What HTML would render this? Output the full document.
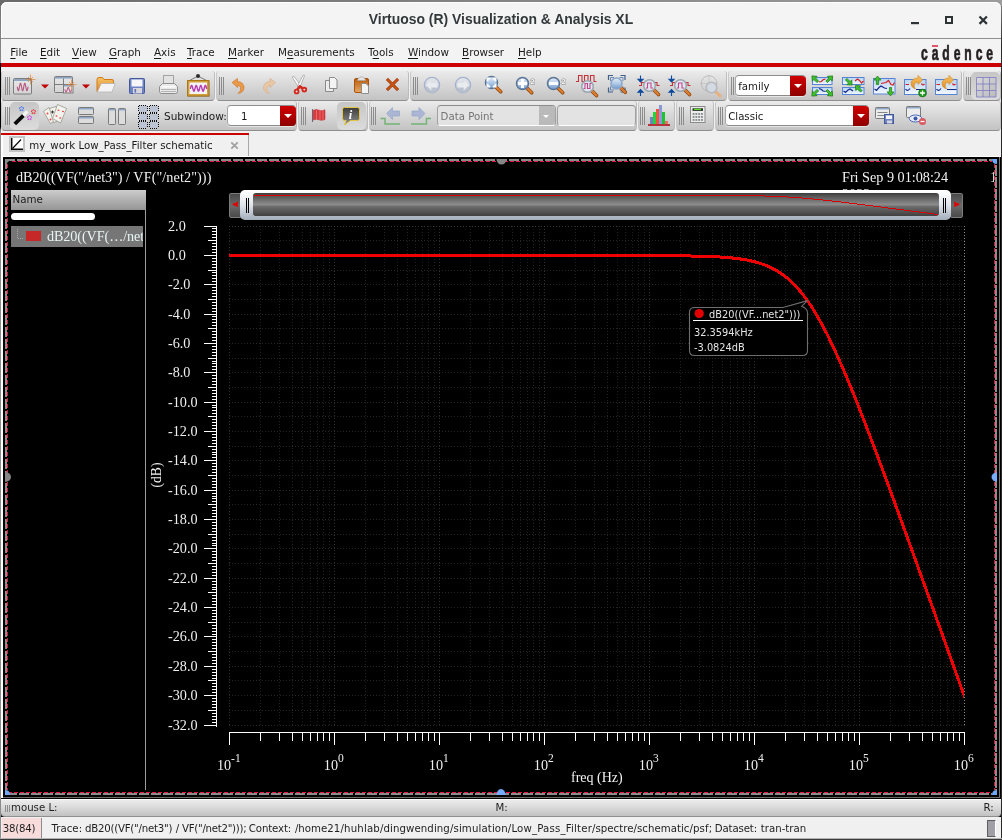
<!DOCTYPE html>
<html lang="en"><head><meta charset="utf-8"><title>Virtuoso (R) Visualization &amp; Analysis XL</title>
<style>
html,body{margin:0;padding:0;background:#000;}
body{width:1002px;height:840px;overflow:hidden;position:relative;font-family:"DejaVu Sans","Liberation Sans",sans-serif;font-size:10.3px;color:#1a1a1a;}
#win{position:absolute;left:0;top:0;width:1002px;height:840px;overflow:hidden;will-change:transform;}
.abs{position:absolute;}
#win div,#win span,#win svg{position:absolute;white-space:pre;}
#win u{text-decoration:underline;text-underline-offset:1.5px;text-decoration-thickness:1px;}
/* title */
#deskbg{left:0;top:0;width:1002px;height:12px;background:linear-gradient(90deg,#6a6a6a,#8a8a8a 60%,#9c9c9c);}
#titlebar{left:1px;top:2px;width:1000px;height:36px;background:#f4f4f4;border-radius:6px 6px 0 0;box-shadow:inset 0 1px 0 #fff,inset 1px 0 0 #fff;}
#titletext{left:0;top:10px;width:1002px;text-align:center;font:bold 15.4px "Liberation Sans",sans-serif;color:#33393b;line-height:18px;transform:scaleX(0.905);transform-origin:500.5px 0;}
#titleline{left:1px;top:38px;width:1000px;height:1px;background:#8f8f8f;}
#menubar{left:1px;top:39px;width:1000px;height:24px;background:#f3f3f3;}
.mi{top:44px;line-height:16px;font-size:10.4px;color:#1a1a1a;}
#redline{left:1px;top:63px;width:1000px;height:4px;background:#cc0000;}
#tbarea{left:1px;top:67px;width:1000px;height:64px;background:#f0f0f0;}
.tb{background:linear-gradient(#ebebeb,#dbdbdb 40%,#c3c3c3);border-bottom:1px solid #8e8e8e;border-right:1px solid #bcbcbc;border-left:1px solid #c8c8c8;border-radius:3px 3px 4px 4px;box-sizing:border-box;}
.hd{width:5px;height:18px;background:linear-gradient(90deg,#8c8c8c 0 0.9px,transparent 0.9px 2px,#8c8c8c 2px 2.9px,transparent 2.9px 4.1px,#8c8c8c 4.1px 5px);}
#tabred{left:1px;top:133px;width:248px;height:2px;background:#cc0000;}
#tabsep{left:248px;top:135px;width:1px;height:21px;background:#a8a8a8;}
#tabico{left:9px;top:136px;width:12px;height:12px;border:2px solid #c4c4c4;background:#fff;}
#tabtxt{left:29.2px;top:137px;font-size:10.25px;line-height:16px;color:#1a1a1a;}
#tabbar{left:1px;top:131px;width:1000px;height:25px;background:#f0f0f0;}
#tabwhite{left:1px;top:156px;width:1000px;height:1px;background:#fff;}
/* graph */
#graph{left:0;top:0;width:1002px;height:840px;}
#gbg{left:3px;top:157px;width:997px;height:642px;background:#000;}
.yl{left:168px;font:14.2px "Liberation Serif",serif;color:#f0f0f0;line-height:20px;}
.xl{transform:translateX(-50%);top:755px;font:14.2px "Liberation Serif",serif;color:#f0f0f0;line-height:20px;}
.xl sup{font-size:11.5px;vertical-align:baseline;position:relative;top:-8px;line-height:0;}
.gt{font:14.2px "Liberation Serif",serif;color:#f2f2f2;line-height:20px;}
#lghead{left:11px;top:190px;width:135px;height:20px;background:linear-gradient(#cdcdcd,#b0b0b0 50%,#959595);}
#lgname{left:12.5px;top:191px;font-size:10.3px;line-height:16px;color:#1c1c1c;}
#lgsep{left:145px;top:210px;width:1px;height:580px;background:#9c9c9c;}
#lgpill{left:11px;top:213px;width:84px;height:7px;border-radius:4px;background:#fff;}
#lgrow{left:11px;top:226px;width:132px;height:21px;background:#767676;overflow:hidden;}
#lgsw{left:15px;top:5px;width:15px;height:10px;background:#c62828;}
#lgtxt{left:36px;top:0px;font:14.2px "Liberation Serif",serif;color:#e8f4f4;line-height:20px;letter-spacing:-0.1px;}
.slbtn{top:193px;width:13px;height:25px;box-sizing:border-box;border:1px solid #7c7c7c;border-radius:2px;background:linear-gradient(#4a4a4a,#6a6a6a 50%,#4a4a4a);}
#slthumb{left:240px;top:190px;width:711px;height:30px;border-radius:5px;background:linear-gradient(#ffffff,#f4f6f9 20%,#dfe4ea 50%,#b9c2cd 80%,#a3adba);}
#sltrack{left:253px;top:193px;width:686px;height:23px;border-radius:3px;overflow:hidden;background:linear-gradient(#3c3c3c,#585858 15%,#8c8c8c 50%,#6a6a6a 60%,#404040);}
.grip{top:198px;width:1.2px;height:15px;background:#000;}
#ydb{left:136.5px;top:465px;width:40px;text-align:center;transform:rotate(-90deg);font-size:13.6px;}
.mk{font:9.8px "DejaVu Sans","Liberation Sans",sans-serif;color:#e4e4e4;line-height:15px;}
#edgeL{left:0;top:6px;width:1px;height:834px;background:linear-gradient(#777 0,#8a8a8a 57px,#000 57px,#000 121px,#8c8c8c 125px);}
#edgeLw{left:1px;top:135px;width:2px;height:663px;background:#fff;}
#edgeR{left:1001px;top:6px;width:1px;height:834px;background:linear-gradient(#777 0,#2a2a2a 40px);}
#edgeRg{left:999px;top:157px;width:1px;height:641px;background:#7a7a7a;}
#gbot{left:3px;top:797px;width:997px;height:1px;background:#6a6a6a;}
#st1w{left:1px;top:799px;width:1000px;height:1px;background:#fff;}
#st1{left:1px;top:800px;width:1000px;height:17px;box-sizing:border-box;border-bottom:1px solid #8e8e8e;border-radius:0 0 4px 4px;background:linear-gradient(#ececec,#d8d8d8 50%,#c2c2c2);}
.st{font-size:10.2px;line-height:16px;color:#1e1e1e;}
#st2{left:1px;top:817px;width:1000px;height:21px;background:#f0f0f0;}
#stpink{left:2px;top:818px;width:39px;height:20px;background:#f8dcdc;}
#stsep{left:41px;top:818px;width:1px;height:20px;background:#8c8c8c;}
#stgrip{left:987px;top:820px;width:8.5px;height:16.5px;box-sizing:border-box;background:#9f9fa5;border:1px solid #5e5e5e;border-right:1px solid #fff;}
#stbot{left:0;top:838px;width:1002px;height:2px;background:linear-gradient(#b4b4b4 0 1px,#3a3a3a 1px);}
.act{border-radius:5px;background:linear-gradient(#c6c6c6,#d0d0d0 45%,#dcdcdc);}
.cb{box-sizing:border-box;border:1px solid #a6a6a6;border-top-color:#8e8e8e;border-bottom-color:#8a8a8a;border-radius:4px;background:#fff;box-shadow:0 1px 0 rgba(255,255,255,0.55);}
.cb .cbr{position:absolute;right:-1px;top:-0.5px;bottom:-1px;width:16px;border-radius:0 4px 4px 0;background:linear-gradient(#d00000,#b40000 45%,#8c0000);}
.cb .cbr:after{content:"";position:absolute;left:4px;top:8.5px;border:4px solid transparent;border-top:4.5px solid #fff;border-bottom:0;}
.cb.dis{background:#e3e3e3;border-color:#8c8c8c #a0a0a0 #fdfdfd #a0a0a0;box-shadow:none;}
.cb.dis .cbr{background:#bababa;right:0;top:0;bottom:0;border-radius:0 3px 3px 0;}
.cb.dis .cbr:after{left:4.5px;top:8.5px;border-width:3.5px;border-top-width:3.5px;}
.cbt{font-size:10.2px;line-height:16px;color:#1a1a1a;}
#logo{left:921px;top:41px;font:bold 19.6px "Liberation Sans",sans-serif;letter-spacing:6.3px;color:#231f20;line-height:24px;transform-origin:0 0;transform:scaleX(0.62);-webkit-text-stroke:0.7px #231f20;}
#logobar{left:932px;top:45px;width:6px;height:2px;background:#e2566a;}

</style></head>
<body>
<div id="win">
<div id="deskbg"></div>
<div id="titlebar"></div>
<div id="titletext">Virtuoso (R) Visualization &amp; Analysis XL</div>
<div id="titleline"></div>
<div id="menubar"></div>
<span class="mi" style="left:10.3px"><u>F</u>ile</span>
<span class="mi" style="left:40px"><u>E</u>dit</span>
<span class="mi" style="left:72px"><u>V</u>iew</span>
<span class="mi" style="left:109px"><u>G</u>raph</span>
<span class="mi" style="left:154px"><u>A</u>xis</span>
<span class="mi" style="left:187px"><u>T</u>race</span>
<span class="mi" style="left:228px"><u>M</u>arker</span>
<span class="mi" style="left:278px">M<u>e</u>asurements</span>
<span class="mi" style="left:368px">T<u>o</u>ols</span>
<span class="mi" style="left:408px"><u>W</u>indow</span>
<span class="mi" style="left:462px"><u>B</u>rowser</span>
<span class="mi" style="left:518px"><u>H</u>elp</span>
<span id="logo">cadence</span>
<div id="logobar"></div>
<svg width="90" height="14" viewBox="0 0 90 14" style="left:905px;top:13px"><rect x="6" y="9" width="8" height="2.2" fill="#2e3436"/><rect x="41" y="4" width="6" height="6" fill="none" stroke="#2e3436" stroke-width="2"/><path d="M74.500 3.500L81.900 10.900M81.900 3.500L74.500 10.900" stroke="#2e3436" stroke-width="2.2" fill="none"/></svg>
<div id="redline"></div>
<div id="tbarea"></div>
<div id="tabbar"></div>
<div id="tabred"></div>
<div id="tabsep"></div>
<div id="tabwhite"></div>
<div id="tabico"><svg width="12" height="12" viewBox="0 0 12 12" style="left:0;top:0"><path d="M0.700 0V11.300H12" stroke="#0a0a0a" stroke-width="1.5" fill="none"/><path d="M1.500 10.500L10 1.500" stroke="#0a0a0a" stroke-width="1.2" fill="none"/></svg></div>
<span id="tabtxt">my_work Low_Pass_Filter schematic</span>
<svg width="9" height="9" viewBox="0 0 9 9" style="left:229.5px;top:140.5px"><path d="M1.300 1.300L7.700 7.700M7.700 1.300L1.300 7.700" stroke="#a2a2a2" stroke-width="1.8" fill="none"/></svg>

<div class="tb" style="left:1px;top:71px;width:214px;height:30px"></div>
<div class="tb" style="left:216px;top:71px;width:192.5px;height:30px"></div>
<div class="tb" style="left:409.5px;top:71px;width:317.5px;height:30px"></div>
<div class="tb" style="left:728px;top:71px;width:233.5px;height:30px"></div>
<div class="tb" style="left:963px;top:71px;width:38px;height:30px"></div>
<div class="tb" style="left:1px;top:101px;width:296px;height:30px"></div>
<div class="tb" style="left:298px;top:101px;width:69.5px;height:30px"></div>
<div class="tb" style="left:368.5px;top:101px;width:268.5px;height:30px"></div>
<div class="tb" style="left:637.5px;top:101px;width:37.5px;height:30px"></div>
<div class="tb" style="left:676px;top:101px;width:38px;height:30px"></div>
<div class="tb" style="left:715px;top:101px;width:286px;height:30px"></div>
<div class="act" style="left:10px;top:102px;width:29px;height:28px"></div>
<div class="act" style="left:337px;top:102px;width:29px;height:28px"></div>
<div class="act" style="left:971px;top:72px;width:29px;height:28px"></div>
<div class="hd" style="left:5px;top:77px"></div>
<div class="hd" style="left:219px;top:77px"></div>
<div class="hd" style="left:413px;top:77px"></div>
<div class="hd" style="left:731px;top:77px"></div>
<div class="hd" style="left:966px;top:77px"></div>
<div class="hd" style="left:5px;top:107px"></div>
<div class="hd" style="left:301px;top:107px"></div>
<div class="hd" style="left:371px;top:107px"></div>
<div class="hd" style="left:640px;top:107px"></div>
<div class="hd" style="left:679px;top:107px"></div>
<div class="hd" style="left:718px;top:107px"></div>
<div class="cb" style="left:735px;top:75px;width:71px;height:21px"><i class="cbr"></i></div>
<span class="cbt" style="left:738.2px;top:79px">family</span>
<div class="cb" style="left:227px;top:105px;width:69px;height:21px"><i class="cbr"></i></div>
<span class="cbt" style="left:241px;top:109px">1</span>
<div class="cb" style="left:725px;top:105px;width:143.5px;height:21px"><i class="cbr"></i></div>
<span class="cbt" style="left:728.2px;top:109px">Classic</span>
<div class="cb dis" style="left:437px;top:105px;width:118.5px;height:21px"><i class="cbr"></i></div>
<span class="cbt" style="left:440.6px;top:109px;color:#737373">Data Point</span>
<div class="cb dis" style="left:556.5px;top:105px;width:79.5px;height:21px"></div>
<span class="cbt" style="left:164px;top:108px;font-size:10.5px">Subwindow:</span>
<svg width="1002" height="140" viewBox="0 0 1002 140" style="left:0;top:0">
<defs>
<linearGradient id="lens" x1="0" y1="0" x2="0" y2="1"><stop offset="0" stop-color="#e6eef8"/><stop offset="0.5" stop-color="#b0cae8"/><stop offset="1" stop-color="#6f98cc"/></linearGradient>
<linearGradient id="lensg" x1="0" y1="0" x2="0" y2="1"><stop offset="0" stop-color="#e6e8ea"/><stop offset="1" stop-color="#c4ccd6"/></linearGradient>
<linearGradient id="pan" x1="0" y1="0" x2="0" y2="1"><stop offset="0" stop-color="#b8d4f4"/><stop offset="1" stop-color="#f4f8fe"/></linearGradient>
<linearGradient id="org" x1="0" y1="0" x2="0" y2="1"><stop offset="0" stop-color="#f6c46a"/><stop offset="1" stop-color="#e08a1e"/></linearGradient>
<linearGradient id="clip" x1="0" y1="0" x2="0" y2="1"><stop offset="0" stop-color="#b85a08"/><stop offset="1" stop-color="#e6a868"/></linearGradient>
<linearGradient id="grn" x1="0" y1="0" x2="0" y2="1"><stop offset="0" stop-color="#5fd03a"/><stop offset="1" stop-color="#1f8a14"/></linearGradient>
<linearGradient id="bub" x1="0" y1="0" x2="0" y2="1"><stop offset="0" stop-color="#3c3c3c"/><stop offset="1" stop-color="#8e8e8e"/></linearGradient>
<linearGradient id="wn" x1="0" y1="0" x2="0" y2="1"><stop offset="0" stop-color="#e8e8e8"/><stop offset="1" stop-color="#d4d4d4"/></linearGradient>
<linearGradient id="gridg" x1="0" y1="0" x2="1" y2="1"><stop offset="0" stop-color="#d8d8d8"/><stop offset="1" stop-color="#bcbcbc"/></linearGradient>
</defs>
<rect x="13.5" y="78.5" width="18" height="15.5" rx="1" fill="url(#wn)" stroke="#7c7c7c"/>
<rect x="14" y="79" width="17" height="2" fill="#8ea6c4"/>
<path d="M17.30 87.00L17.41 87.60L17.52 88.19L17.63 88.74L17.75 89.25L17.86 89.70L17.97 90.08L18.08 90.37L18.19 90.57L18.30 90.68L18.41 90.69L18.53 90.60L18.64 90.42L18.75 90.14L18.86 89.78L18.97 89.35L19.08 88.85L19.19 88.30L19.31 87.72L19.42 87.12L19.53 86.52L19.64 85.93L19.75 85.36L19.86 84.84L19.98 84.38L20.09 83.99L20.20 83.68L20.31 83.46L20.42 83.33L20.53 83.30L20.64 83.37L20.76 83.54L20.87 83.80L20.98 84.14L21.09 84.56L21.20 85.05L21.31 85.58L21.42 86.16L21.54 86.76L21.65 87.36L21.76 87.96L21.87 88.53L21.98 89.06L22.09 89.53L22.20 89.94L22.32 90.26L22.43 90.50L22.54 90.65L22.65 90.70L22.76 90.65L22.87 90.50L22.98 90.26L23.10 89.94L23.21 89.53L23.32 89.06L23.43 88.53L23.54 87.96L23.65 87.36L23.76 86.76L23.88 86.16L23.99 85.58L24.10 85.05L24.21 84.56L24.32 84.14L24.43 83.80L24.54 83.54L24.66 83.37L24.77 83.30L24.88 83.33L24.99 83.46L25.10 83.68L25.21 83.99L25.33 84.38L25.44 84.84L25.55 85.36L25.66 85.93L25.77 86.52L25.88 87.12L25.99 87.72L26.11 88.30L26.22 88.85L26.33 89.35L26.44 89.78L26.55 90.14L26.66 90.42L26.77 90.60L26.89 90.69L27.00 90.68L27.11 90.57L27.22 90.37L27.33 90.08L27.44 89.70L27.55 89.25L27.67 88.74L27.78 88.19L27.89 87.60L28.00 87.00" fill="none" stroke="#b85a82" stroke-width="1.15" stroke-linecap="round" stroke-linejoin="round"/>
<path d="M31.3 79.5L35.5 79.5M31.1 80.1L33.0 82.0M30.5 80.3L30.5 84.5M29.9 80.1L28.0 82.0M29.7 79.5L25.5 79.5M29.9 78.9L28.0 77.0M30.5 78.7L30.5 74.5M31.1 78.9L33.0 77.0" stroke="#e08434" stroke-width="0.7" fill="none"/><circle cx="30.5" cy="79.5" r="0.8" fill="#b07040"/>
<path d="M41 84.5H49L45 88.5Z" fill="#c00000"/>
<rect x="54.5" y="76.5" width="18" height="16" rx="1" fill="url(#wn)" stroke="#7c7c7c"/>
<rect x="55" y="77" width="17" height="1.6" fill="#8ea6c4"/>
<path d="M54.5 84.5H72.5M63.5 78.5V92.5" stroke="#7c7c7c" fill="none"/>
<rect x="63.5" y="84.5" width="9.5" height="8.5" fill="#e4e4e4" stroke="#7c7c7c"/><rect x="64" y="85" width="8.500" height="1.500" fill="#8ea6c4"/>
<path d="M65.00 89.80L65.07 90.03L65.14 90.25L65.20 90.47L65.27 90.68L65.34 90.88L65.41 91.08L65.47 91.26L65.54 91.43L65.61 91.58L65.68 91.71L65.74 91.83L65.81 91.92L65.88 92.00L65.95 92.06L66.02 92.09L66.08 92.10L66.15 92.09L66.22 92.06L66.29 92.00L66.35 91.92L66.42 91.83L66.49 91.71L66.56 91.58L66.62 91.43L66.69 91.26L66.76 91.08L66.83 90.88L66.90 90.68L66.96 90.47L67.03 90.25L67.10 90.03L67.17 89.80L67.23 89.57L67.30 89.35L67.37 89.13L67.44 88.92L67.51 88.72L67.57 88.52L67.64 88.34L67.71 88.17L67.78 88.02L67.84 87.89L67.91 87.77L67.98 87.68L68.05 87.60L68.11 87.54L68.18 87.51L68.25 87.50L68.32 87.51L68.39 87.54L68.45 87.60L68.52 87.68L68.59 87.77L68.66 87.89L68.72 88.02L68.79 88.17L68.86 88.34L68.93 88.52L68.99 88.72L69.06 88.92L69.13 89.13L69.20 89.35L69.27 89.57L69.33 89.80L69.40 90.03L69.47 90.25L69.54 90.47L69.60 90.68L69.67 90.88L69.74 91.08L69.81 91.26L69.88 91.43L69.94 91.58L70.01 91.71L70.08 91.83L70.15 91.92L70.21 92.00L70.28 92.06L70.35 92.09L70.42 92.10L70.48 92.09L70.55 92.06L70.62 92.00L70.69 91.92L70.76 91.83L70.82 91.71L70.89 91.58L70.96 91.43L71.03 91.26L71.09 91.08L71.16 90.88L71.23 90.68L71.30 90.47L71.36 90.25L71.43 90.03L71.50 89.80" fill="none" stroke="#b85a82" stroke-width="1.1" stroke-linecap="round" stroke-linejoin="round"/>
<path d="M72.3 84.5L76.5 84.5M72.1 85.1L74.0 87.0M71.5 85.3L71.5 89.5M70.9 85.1L69.0 87.0M70.7 84.5L66.5 84.5M70.9 83.9L69.0 82.0M71.5 83.7L71.5 79.5M72.1 83.9L74.0 82.0" stroke="#e08434" stroke-width="0.7" fill="none"/><circle cx="71.5" cy="84.5" r="0.8" fill="#b07040"/>
<path d="M82 84.5H90L86 88.5Z" fill="#c00000"/>
<path d="M97 91.5V79.5Q97 77.5 99 77.5H102.5L104 79.5H112Q113.5 79.5 113.5 81V84H101Z" fill="url(#org)" stroke="#d57b16" stroke-width="1"/>
<path d="M97.3 92L101.2 83.5H115.2L112 92Z" fill="#f4f4f4" stroke="#b4b4b4" stroke-width="0.8"/>
<rect x="129.5" y="78.5" width="15" height="15" rx="1" fill="#6d83c4" stroke="#44589c"/>
<rect x="131.5" y="79.5" width="11" height="7" fill="#f6f6f8"/>
<rect x="133" y="88" width="9" height="5.5" fill="#d6d6dc"/>
<rect x="134.5" y="89" width="1.6" height="3.5" fill="#5a70b8"/>
<rect x="163.5" y="75.5" width="10" height="9" fill="#e2e2e2" stroke="#a2a2a2"/>
<path d="M159.500 86.500L162.500 83.500H174.500L177.500 86.500V91.500Q177.500 93.500 175.500 93.500H161.500Q159.500 93.500 159.500 91.500Z" fill="#e9e9e9" stroke="#8e8e8e"/>
<path d="M161.500 86.800H175.500" stroke="#fff" stroke-width="1.4"/><path d="M161 89.500H176M161 91.500H176" stroke="#a8a8a8" stroke-width="0.8"/>
<path d="M189.500 80.500L198 76L206.500 80.500" fill="none" stroke="#7c7c7c" stroke-width="1"/>
<circle cx="198" cy="76" r="2" fill="#2c2c2c"/>
<rect x="188" y="81.300" width="21.500" height="15.500" fill="#555" opacity="0.5"/><rect x="187.500" y="80.500" width="21.500" height="15.500" fill="#d2a03a" stroke="#a87818"/>
<rect x="189.500" y="82.500" width="17.500" height="11.500" fill="#f4f4f4"/>
<path d="M190.50 88.30L190.67 87.64L190.83 87.02L191.00 86.46L191.17 86.00L191.33 85.66L191.50 85.46L191.67 85.40L191.83 85.50L192.00 85.74L192.17 86.12L192.33 86.61L192.50 87.19L192.67 87.83L192.83 88.49L193.00 89.14L193.17 89.75L193.33 90.28L193.50 90.71L193.67 91.01L193.83 91.18L194.00 91.19L194.17 91.05L194.33 90.76L194.50 90.35L194.67 89.83L194.83 89.23L195.00 88.58L195.17 87.92L195.33 87.28L195.50 86.69L195.67 86.18L195.83 85.79L196.00 85.52L196.17 85.41L196.33 85.44L196.50 85.62L196.67 85.94L196.83 86.39L197.00 86.93L197.17 87.55L197.33 88.21L197.50 88.87L197.67 89.50L197.83 90.07L198.00 90.54L198.17 90.90L198.33 91.12L198.50 91.20L198.67 91.12L198.83 90.90L199.00 90.54L199.17 90.07L199.33 89.50L199.50 88.87L199.67 88.21L199.83 87.55L200.00 86.93L200.17 86.39L200.33 85.94L200.50 85.62L200.67 85.44L200.83 85.41L201.00 85.52L201.17 85.79L201.33 86.18L201.50 86.69L201.67 87.28L201.83 87.92L202.00 88.58L202.17 89.23L202.33 89.83L202.50 90.35L202.67 90.76L202.83 91.05L203.00 91.19L203.17 91.18L203.33 91.01L203.50 90.71L203.67 90.28L203.83 89.75L204.00 89.14L204.17 88.49L204.33 87.83L204.50 87.19L204.67 86.61L204.83 86.12L205.00 85.74L205.17 85.50L205.33 85.40L205.50 85.46L205.67 85.66L205.83 86.00L206.00 86.46L206.17 87.02L206.33 87.64L206.50 88.30" fill="none" stroke="#b73cb3" stroke-width="1.4" stroke-linecap="round" stroke-linejoin="round"/>
<path d="M232 82.500L237.500 78.500V81.500Q244 82 244 88Q243.500 92.500 238 93.500Q241.500 91 240.500 87.500Q239.500 85 237.500 85.500V87.500Z" fill="#e9994a" stroke="#d07a26" stroke-width="0.7"/>
<path d="M275.500 82.500L270 78.500V81.500Q263.500 82 263.500 88Q264 92.500 269.500 93.500Q266 91 267 87.500Q268 85 270 85.500V87.500Z" fill="#e9c7a6" stroke="#d8b08a" stroke-width="0.7"/>
<path d="M292.200 77L294 76.200L301.400 86.500L299.200 88.300Z" fill="#fafafa" stroke="#9c9c9c" stroke-width="0.7"/>
<path d="M304.700 75.500L303 75.200L297.300 86.500L299.500 88.200Z" fill="#fafafa" stroke="#9c9c9c" stroke-width="0.7"/>
<path d="M299.600 86.600L297.400 89.800M299.800 86.400L303 88.600" fill="none" stroke="#d22a20" stroke-width="2.6" stroke-linecap="round"/>
<circle cx="296.600" cy="91.500" r="1.900" fill="#f0dcdc" stroke="#d22a20" stroke-width="1.9"/>
<circle cx="304.300" cy="89.600" r="1.900" fill="#f0dcdc" stroke="#d22a20" stroke-width="1.9"/>
<path d="M325.500 80.500H333.500V91.500H325.500Z" fill="#ececec" stroke="#8a8a8a"/>
<path d="M329.500 77.500H334.500L337 80V88.500H329.500Z" fill="#f4f4f4" stroke="#8a8a8a"/>
<rect x="354.500" y="78.500" width="14" height="14" rx="1.500" fill="url(#clip)" stroke="#a85208"/>
<path d="M357.500 80.500Q357.500 77.800 360 77.500Q361.500 75.500 363 77.500Q365.500 77.800 365.500 80.500Z" fill="#e4e4e4" stroke="#a4a4a4" stroke-width="0.7"/>
<path d="M361.500 83.500H366L368.500 86V93.500H361.500Z" fill="#f2f2f2" stroke="#8e8e8e"/>
<path d="M387 79L398 90M398 79L387 90" stroke="#8a2c04" stroke-width="3" fill="none"/>
<path d="M387 79L398 90M398 79L387 90" stroke="#cc5210" stroke-width="1.8" fill="none"/>
<circle cx="432" cy="85" r="7.6" fill="url(#lensg)" stroke="#a3b1cf" stroke-width="1.3"/>
<path d="M425 86.500A7 7 0 0 0 439 86.500Z" fill="#b4bccb" opacity="0.75"/>
<path d="M425.8 85L431.2 79.600V82.400H437.6V87.600H431.2V90.400Z" fill="#e9ecef" stroke="#d4dae2" stroke-width="0.5"/>
<circle cx="463" cy="85" r="7.6" fill="url(#lensg)" stroke="#a3b1cf" stroke-width="1.3"/>
<path d="M456 86.500A7 7 0 0 0 470 86.500Z" fill="#b4bccb" opacity="0.75"/>
<path d="M469.2 85L463.8 79.600V82.400H457.4V87.600H463.8V90.400Z" fill="#e9ecef" stroke="#d4dae2" stroke-width="0.5"/>
<g opacity="1"><path d="M495.9 86.9L500.7 91.7" stroke="#7a3a08" stroke-width="3.6" stroke-linecap="round"/><path d="M495.9 86.9L500.7 91.7" stroke="#cc6a1c" stroke-width="2.6" stroke-linecap="round"/><path d="M495.9 86.9L500.7 91.7" stroke="#f2a660" stroke-width="2.4" stroke-dasharray="0.7 0.9" opacity="0.7"/><circle cx="491.5" cy="82.5" r="6" fill="url(#lens)" stroke="#5a7494" stroke-width="1.5"/></g>
<path d="M487.500 81.300V78.500H490.300M492.700 78.500H495.500V81.300M495.500 83.700V86.500H492.700M490.300 86.500H487.500V83.700" fill="none" stroke="#fff" stroke-width="2"/>
<g opacity="1"><path d="M526.9 87.9L531.7 92.7" stroke="#7a3a08" stroke-width="3.6" stroke-linecap="round"/><path d="M526.9 87.9L531.7 92.7" stroke="#cc6a1c" stroke-width="2.6" stroke-linecap="round"/><path d="M526.9 87.9L531.7 92.7" stroke="#f2a660" stroke-width="2.4" stroke-dasharray="0.7 0.9" opacity="0.7"/><circle cx="522.5" cy="83.5" r="6" fill="url(#lens)" stroke="#5a7494" stroke-width="1.5"/></g>
<path d="M518 83.500H527M522.500 79V88" stroke="#fff" stroke-width="3"/>
<text x="530.4" y="83.8" font-family="Liberation Sans,sans-serif" font-size="7.5" font-weight="bold" fill="#fff" stroke="#8a8a8a" stroke-width="0.9" paint-order="stroke">2</text>
<g opacity="1"><path d="M557.9 87.9L562.7 92.7" stroke="#7a3a08" stroke-width="3.6" stroke-linecap="round"/><path d="M557.9 87.9L562.7 92.7" stroke="#cc6a1c" stroke-width="2.6" stroke-linecap="round"/><path d="M557.9 87.9L562.7 92.7" stroke="#f2a660" stroke-width="2.4" stroke-dasharray="0.7 0.9" opacity="0.7"/><circle cx="553.5" cy="83.5" r="6" fill="url(#lens)" stroke="#5a7494" stroke-width="1.5"/></g>
<path d="M549 83.500H558" stroke="#fff" stroke-width="3"/>
<text x="561.4" y="83.8" font-family="Liberation Sans,sans-serif" font-size="7.5" font-weight="bold" fill="#fff" stroke="#8a8a8a" stroke-width="0.9" paint-order="stroke">2</text>
<path d="M576 81.500H578.500V75.500H582V81.500H584.500V75.500H588V81.500H590.500V75.500H594V81.500H596.500" fill="none" stroke="#c0343a" stroke-width="1.1"/>
<g opacity="1"><path d="M591.7 90.7L596.5 95.5" stroke="#7a3a08" stroke-width="3.6" stroke-linecap="round"/><path d="M591.7 90.7L596.5 95.5" stroke="#cc6a1c" stroke-width="2.6" stroke-linecap="round"/><path d="M591.7 90.7L596.5 95.5" stroke="#f2a660" stroke-width="2.4" stroke-dasharray="0.7 0.9" opacity="0.7"/><circle cx="587.5" cy="86.5" r="5.8" fill="#dfe6ee" stroke="#9aa6b0" stroke-width="1.5"/></g>
<path d="M583.500 88.500H585V83.500H587.500V88.500H590V83.500H591.500" fill="none" stroke="#c4478c" stroke-width="1.1"/>
<path d="M608.500 80V75.500H613M620.500 75.500H625V80M625 87.500V92H620.500M613 92H608.500V87.500" fill="none" stroke="#3e5f8c" stroke-width="1.2"/>
<path d="M610.500 81V77.500H614M619.500 77.500H623V81M623 86.500V90H619.500M614 90H610.500V86.500" fill="none" stroke="#6a88b0" stroke-width="1"/>
<g opacity="1"><path d="M620.5 87.5L625.3 92.3" stroke="#7a3a08" stroke-width="3.6" stroke-linecap="round"/><path d="M620.5 87.5L625.3 92.3" stroke="#cc6a1c" stroke-width="2.6" stroke-linecap="round"/><path d="M620.5 87.5L625.3 92.3" stroke="#f2a660" stroke-width="2.4" stroke-dasharray="0.7 0.9" opacity="0.7"/><circle cx="616.5" cy="83.5" r="5.5" fill="url(#lens)" stroke="#8aa6c8" stroke-width="1.5"/></g>
<path d="M640.5 75.500V81M637.9 79.200L640.5 82L643.1 79.200ZM640.5 96V90.500M637.9 92.300L640.5 89.500L643.1 92.300Z" stroke="#0d4a9c" stroke-width="1.1" fill="#0d4a9c"/>
<path d="M639.0 85.500H641.5V82.500H644.5M654.5 82.500H657.0V85.500H659.5" fill="none" stroke="#c0343a" stroke-width="1.1"/>
<g opacity="1"><path d="M653.7 89.7L658.5 94.5" stroke="#7a3a08" stroke-width="3.6" stroke-linecap="round"/><path d="M653.7 89.7L658.5 94.5" stroke="#cc6a1c" stroke-width="2.6" stroke-linecap="round"/><path d="M653.7 89.7L658.5 94.5" stroke="#f2a660" stroke-width="2.4" stroke-dasharray="0.7 0.9" opacity="0.7"/><circle cx="649.5" cy="85.5" r="5.8" fill="#dfe6ee" stroke="#9aa6b0" stroke-width="1.5"/></g>
<path d="M646.0 88H647.5V83H651.0V88H653.0" fill="none" stroke="#c4478c" stroke-width="1.1"/>
<path d="M671.5 75.500V81M668.9 79.200L671.5 82L674.1 79.200ZM671.5 96V90.500M668.9 92.300L671.5 89.500L674.1 92.300Z" stroke="#0d4a9c" stroke-width="1.1" fill="#0d4a9c"/>
<path d="M670.0 85.500H672.5V82.500H675.5M685.5 82.500H688.0V85.500H690.5" fill="none" stroke="#c0343a" stroke-width="1.1"/>
<g opacity="1"><path d="M684.7 89.7L689.5 94.5" stroke="#7a3a08" stroke-width="3.6" stroke-linecap="round"/><path d="M684.7 89.7L689.5 94.5" stroke="#cc6a1c" stroke-width="2.6" stroke-linecap="round"/><path d="M684.7 89.7L689.5 94.5" stroke="#f2a660" stroke-width="2.4" stroke-dasharray="0.7 0.9" opacity="0.7"/><circle cx="680.5" cy="85.5" r="5.8" fill="#dfe6ee" stroke="#9aa6b0" stroke-width="1.5"/></g>
<path d="M677.0 88H678.5V83H682.0V88H684.0" fill="none" stroke="#c4478c" stroke-width="1.1"/>
<circle cx="709" cy="83.500" r="7.800" fill="none" stroke="#b2b2b2" stroke-width="0.8"/><path d="M709 75V92M700 83.500H718" stroke="#bcbcbc" stroke-width="0.6"/>
<g opacity="1"><path d="M715.4 91.4L720.2 96.2" stroke="#d8c0a8" stroke-width="3.6" stroke-linecap="round"/><path d="M715.4 91.4L720.2 96.2" stroke="#e3b48c" stroke-width="2.6" stroke-linecap="round"/><path d="M715.4 91.4L720.2 96.2" stroke="#f2a660" stroke-width="2.4" stroke-dasharray="0.7 0.9" opacity="0.7"/><circle cx="711.5" cy="87.5" r="5.3" fill="#d4dae2" stroke="#b4b8be" stroke-width="1.5"/></g>
<rect x="812.5" y="77.5" width="19.5" height="7" fill="url(#pan)" stroke="#5584d6" stroke-width="1"/>
<rect x="812.5" y="87.5" width="19.5" height="7" fill="url(#pan)" stroke="#5584d6" stroke-width="1"/>
<path d="M819 82L821.500 81.500L823 79.800L825.500 79" fill="none" stroke="#d81e1e" stroke-width="1.2"/>
<path d="M819 88.500L821.500 89.500L823 91L825.500 91.500" fill="none" stroke="#14288c" stroke-width="1.2"/>
<path transform="translate(815,79) rotate(-45) scale(1)" d="M0 -4.400L3.400 -0.400H1.100V4H-1.100V-0.400H-3.400Z" fill="#3fc02c" stroke="#1a7a10" stroke-width="0.7"/>
<path transform="translate(829.5,79) rotate(45) scale(1)" d="M0 -4.400L3.400 -0.400H1.100V4H-1.100V-0.400H-3.400Z" fill="#3fc02c" stroke="#1a7a10" stroke-width="0.7"/>
<path transform="translate(815,93) rotate(-135) scale(1)" d="M0 -4.400L3.400 -0.400H1.100V4H-1.100V-0.400H-3.400Z" fill="#3fc02c" stroke="#1a7a10" stroke-width="0.7"/>
<path transform="translate(829.5,93) rotate(135) scale(1)" d="M0 -4.400L3.400 -0.400H1.100V4H-1.100V-0.400H-3.400Z" fill="#3fc02c" stroke="#1a7a10" stroke-width="0.7"/>
<rect x="842.5" y="77.5" width="21.5" height="7" fill="url(#pan)" stroke="#5584d6" stroke-width="1"/>
<rect x="842.5" y="87.5" width="21.5" height="7" fill="url(#pan)" stroke="#5584d6" stroke-width="1"/>
<path d="M855 81L857.500 79L859.500 80.500L861.500 83L863.500 81" fill="none" stroke="#d81e1e" stroke-width="1.2"/>
<path d="M843.500 91L845.500 92.500L848 90L850 89L853 91" fill="none" stroke="#14288c" stroke-width="1.2"/>
<path transform="translate(849,82) rotate(135) scale(1)" d="M0 -4.400L3.400 -0.400H1.100V4H-1.100V-0.400H-3.400Z" fill="#3fc02c" stroke="#1a7a10" stroke-width="0.7"/>
<path transform="translate(858.5,88.5) rotate(-45) scale(1)" d="M0 -4.400L3.400 -0.400H1.100V4H-1.100V-0.400H-3.400Z" fill="#3fc02c" stroke="#1a7a10" stroke-width="0.7"/>
<rect x="873.5" y="78.5" width="21.5" height="15.5" fill="url(#pan)" stroke="#5584d6" stroke-width="1"/>
<path d="M881 83.500L886 82.500L888.500 80.500L891 84.500L893 85L894.500 82.500" fill="none" stroke="#d81e1e" stroke-width="1.2"/>
<path d="M874.500 89L876.500 90.500L879 87.500L881 86L884.500 88L887 88.500" fill="none" stroke="#14288c" stroke-width="1.2"/>
<path transform="translate(877.5,80.5) rotate(0) scale(1)" d="M0 -4.400L3.400 -0.400H1.100V4H-1.100V-0.400H-3.400Z" fill="#3fc02c" stroke="#1a7a10" stroke-width="0.7"/>
<path transform="translate(890.5,91.5) rotate(180) scale(1)" d="M0 -4.400L3.400 -0.400H1.100V4H-1.100V-0.400H-3.400Z" fill="#3fc02c" stroke="#1a7a10" stroke-width="0.7"/>
<rect x="904.5" y="79.5" width="21.5" height="15" fill="url(#pan)" stroke="#5584d6" stroke-width="1"/>
<path d="M905.5 84.500H909.0M921.5 83.500Q922.5 86 924.5 84" fill="none" stroke="#d81e1e" stroke-width="1.2"/>
<path d="M905.5 89Q907.5 92 910.0 88.500M916.0 89.500H925.5" fill="none" stroke="#14288c" stroke-width="1.2"/>
<path d="M922.5 80L918.0 75.300V78Q911.0 78.500 911.0 84Q911.3 87.500 915.5 89Q913.5 86.500 914.5 84Q915.5 82 918.0 82.300V84.600Z" fill="url(#org)" stroke="#d98a20" stroke-width="0.6"/>
<rect x="935.5" y="79.5" width="21.5" height="15" fill="url(#pan)" stroke="#5584d6" stroke-width="1"/>
<path d="M936.5 84.500H940.0M952.5 83.500Q953.5 86 955.5 84" fill="none" stroke="#d81e1e" stroke-width="1.2"/>
<path d="M936.5 89Q938.5 92 941.0 88.500M947.0 89.500H956.5" fill="none" stroke="#14288c" stroke-width="1.2"/>
<path d="M953.5 80L949.0 75.300V78Q942.0 78.500 942.0 84Q942.3 87.500 946.5 89Q944.5 86.500 945.5 84Q946.5 82 949.0 82.300V84.600Z" fill="url(#org)" stroke="#d98a20" stroke-width="0.6"/>
<circle cx="922.500" cy="93" r="3.900" fill="#1f9a1a" stroke="#0c6a0c" stroke-width="0.6"/><path d="M920 93H925M922.500 90.500V95.500" stroke="#fff" stroke-width="1.3"/>
<rect x="976.5" y="77.5" width="19.5" height="19.5" fill="url(#gridg)"/>
<path d="M976.5 77.500H996V97H976.500ZM983 77.500V97M989.500 77.500V97M976.500 84H996M976.500 90.500H996" fill="none" stroke="#8582c6" stroke-width="0.9"/>
<path d="M14.800 124L23.500 115.300" stroke="#0a0a0a" stroke-width="3.8"/><path d="M23.500 115.300L27.300 111.500" stroke="#f4f4f4" stroke-width="3.8"/><path d="M23.500 115.300L27.300 111.500" stroke="#999" stroke-width="4.6" stroke-opacity="0.35"/><path d="M23.500 115.300L27.300 111.500" stroke="#f6f6f6" stroke-width="3.4"/>
<path d="M21.5 106.2L22.3 107.7L24.0 108.0L22.7 109.2L23.0 110.9L21.5 110.1L20.0 110.9L20.3 109.2L19.0 108.0L20.7 107.7Z" fill="none" stroke="#4d78f2" stroke-width="0.9"/>
<path d="M33.5 109.2L34.3 110.7L36.0 111.0L34.7 112.2L35.0 113.9L33.5 113.1L32.0 113.9L32.3 112.2L31.0 111.0L32.7 110.7Z" fill="none" stroke="#e23c3c" stroke-width="0.9"/>
<path d="M29.5 115.2L30.3 116.7L32.0 117.0L30.7 118.2L31.0 119.9L29.5 119.1L28.0 119.9L28.3 118.2L27.0 117.0L28.7 116.7Z" fill="none" stroke="#d24adf" stroke-width="0.9"/>
<g stroke="#8c8c84" stroke-width="0.7" fill="#f4f4ee"><path d="M43.500 111.500L49 107.500L56 120L50.500 123.500Z"/><path d="M49.500 108.500L56 106.500L60.500 120.500L53.500 122.500Z"/><path d="M57.500 104.500L66.500 108.500L60.500 123L52.500 118.500Z"/></g>
<g fill="#e84a4a"><circle cx="47.500" cy="113.500" r="1"/><circle cx="50.500" cy="119.500" r="1"/><ellipse cx="58.500" cy="110.300" rx="1.100" ry="0.800"/><ellipse cx="63" cy="111.500" rx="1.100" ry="0.800"/><ellipse cx="56.500" cy="116" rx="1.100" ry="0.800"/><ellipse cx="60.200" cy="118" rx="1.100" ry="0.800"/></g><path d="M52.500 110.500V113.500M51 112H54" stroke="#333" stroke-width="1"/>
<rect x="78.500" y="107.5" width="15" height="7" rx="0.8" fill="#dcdcdc" stroke="#7a7a7a"/><rect x="79" y="108.0" width="14" height="1.500" fill="#8fa7c6"/>
<rect x="78.500" y="116.5" width="15" height="7" rx="0.8" fill="#dcdcdc" stroke="#7a7a7a"/><rect x="79" y="117.0" width="14" height="1.500" fill="#8fa7c6"/>
<rect x="108.5" y="108.500" width="7" height="16" rx="0.8" fill="#dcdcdc" stroke="#7a7a7a"/><rect x="109.0" y="109" width="6" height="1.500" fill="#8fa7c6"/>
<rect x="118.5" y="108.500" width="7" height="16" rx="0.8" fill="#dcdcdc" stroke="#7a7a7a"/><rect x="119.0" y="109" width="6" height="1.500" fill="#8fa7c6"/>
<rect x="138.5" y="105.5" width="9" height="7" rx="1.5" fill="#bcc3d3"/>
<path d="M139 105h1v1h-1zM139 112h1v1h-1zM141 105h1v1h-1zM141 112h1v1h-1zM143 105h1v1h-1zM143 112h1v1h-1zM145 105h1v1h-1zM145 112h1v1h-1zM138 106h1v1h-1zM147 106h1v1h-1zM138 108h1v1h-1zM147 108h1v1h-1zM138 110h1v1h-1zM147 110h1v1h-1z" fill="#0c0c0c"/>
<rect x="138.5" y="113.5" width="9" height="7" rx="1.5" fill="#bcc3d3"/>
<path d="M139 113h1v1h-1zM139 120h1v1h-1zM141 113h1v1h-1zM141 120h1v1h-1zM143 113h1v1h-1zM143 120h1v1h-1zM145 113h1v1h-1zM145 120h1v1h-1zM138 114h1v1h-1zM147 114h1v1h-1zM138 116h1v1h-1zM147 116h1v1h-1zM138 118h1v1h-1zM147 118h1v1h-1z" fill="#0c0c0c"/>
<rect x="138.5" y="121.5" width="9" height="7" rx="1.5" fill="#bcc3d3"/>
<path d="M139 121h1v1h-1zM139 128h1v1h-1zM141 121h1v1h-1zM141 128h1v1h-1zM143 121h1v1h-1zM143 128h1v1h-1zM145 121h1v1h-1zM145 128h1v1h-1zM138 122h1v1h-1zM147 122h1v1h-1zM138 124h1v1h-1zM147 124h1v1h-1zM138 126h1v1h-1zM147 126h1v1h-1z" fill="#0c0c0c"/>
<rect x="149.5" y="105.5" width="9" height="7" rx="1.5" fill="#bcc3d3"/>
<path d="M150 105h1v1h-1zM150 112h1v1h-1zM152 105h1v1h-1zM152 112h1v1h-1zM154 105h1v1h-1zM154 112h1v1h-1zM156 105h1v1h-1zM156 112h1v1h-1zM149 106h1v1h-1zM158 106h1v1h-1zM149 108h1v1h-1zM158 108h1v1h-1zM149 110h1v1h-1zM158 110h1v1h-1z" fill="#0c0c0c"/>
<rect x="149.5" y="113.5" width="9" height="7" rx="1.5" fill="#bcc3d3"/>
<path d="M150 113h1v1h-1zM150 120h1v1h-1zM152 113h1v1h-1zM152 120h1v1h-1zM154 113h1v1h-1zM154 120h1v1h-1zM156 113h1v1h-1zM156 120h1v1h-1zM149 114h1v1h-1zM158 114h1v1h-1zM149 116h1v1h-1zM158 116h1v1h-1zM149 118h1v1h-1zM158 118h1v1h-1z" fill="#0c0c0c"/>
<rect x="149.5" y="121.5" width="9" height="7" rx="1.5" fill="#bcc3d3"/>
<path d="M150 121h1v1h-1zM150 128h1v1h-1zM152 121h1v1h-1zM152 128h1v1h-1zM154 121h1v1h-1zM154 128h1v1h-1zM156 121h1v1h-1zM156 128h1v1h-1zM149 122h1v1h-1zM158 122h1v1h-1zM149 124h1v1h-1zM158 124h1v1h-1zM149 126h1v1h-1zM158 126h1v1h-1z" fill="#0c0c0c"/>
<path d="M312.500 109V122" stroke="#6a6a7a" stroke-width="1.1"/>
<path d="M313.200 110.500Q316 108.800 319 110.200T325 109.800V119.500Q322 121 319 119.800T313.200 120Z" fill="#d93a3e" stroke="#b3282c" stroke-width="0.5"/>
<path d="M316.500 110V119.800M320 110.500V120M323 110.500V120" stroke="#ec7070" stroke-width="0.9" fill="none"/>
<path d="M344.500 107.500H357.500Q359.500 107.500 359.500 109.500V118.500Q359.500 120.500 357.500 120.500H350.500L344.500 125L346.200 120.500H344.500Q342.500 120.500 342.500 118.500V109.500Q342.500 107.500 344.500 107.500Z" fill="url(#bub)" stroke="#e2c542" stroke-width="1"/>
<text x="348.8" y="118.500" font-family="Liberation Serif,serif" font-style="italic" font-weight="bold" font-size="12.5" fill="#fff">i</text>
<path d="M380.500 118.500H385V124H400" fill="none" stroke="#74b474" stroke-width="1.500"/>
<path d="M386.500 113.500L392.500 107.500V111H399.500V116H392.500V119.500Z" fill="#aab6d3" stroke="#97a7c8" stroke-width="0.7"/>
<path d="M411 124H426.500V118.500H431" fill="none" stroke="#74b474" stroke-width="1.500"/>
<path d="M425 113.500L419 107.500V111H412V116H419V119.500Z" fill="#aab6d3" stroke="#97a7c8" stroke-width="0.7"/>
<rect x="650" y="117" width="3" height="7" fill="#7480c4"/><rect x="653" y="112" width="3" height="12" fill="#22d43c"/><rect x="656" y="109" width="3" height="15" fill="#f0523c"/><rect x="659" y="105" width="3" height="19" fill="#8c98d8"/><rect x="662" y="112" width="3" height="12" fill="#1fc234"/><rect x="665" y="121" width="3" height="3" fill="#f07060"/>
<rect x="648" y="124" width="22" height="2" fill="#b8343a"/>
<rect x="690.500" y="106.500" width="14.500" height="16" fill="#ececec" stroke="#8a8a8a"/>
<rect x="692.500" y="108.300" width="10.500" height="2.600" fill="#243424"/><rect x="694" y="108.800" width="7" height="1.200" fill="#62e030"/>
<rect x="692.6" y="113.0" width="1.900" height="1.900" fill="#8a9090"/>
<rect x="695.4" y="113.0" width="1.900" height="1.900" fill="#8a9090"/>
<rect x="698.2" y="113.0" width="1.900" height="1.900" fill="#8a9090"/>
<rect x="701.0" y="113.0" width="1.900" height="1.900" fill="#8a9090"/>
<rect x="692.6" y="116.0" width="1.900" height="1.900" fill="#8a9090"/>
<rect x="695.4" y="116.0" width="1.900" height="1.900" fill="#8a9090"/>
<rect x="698.2" y="116.0" width="1.900" height="1.900" fill="#8a9090"/>
<rect x="701.0" y="116.0" width="1.900" height="1.900" fill="#8a9090"/>
<rect x="692.6" y="119.0" width="1.900" height="1.900" fill="#8a9090"/>
<rect x="695.4" y="119.0" width="1.900" height="1.900" fill="#8a9090"/>
<rect x="698.2" y="119.0" width="1.900" height="1.900" fill="#8a9090"/>
<rect x="701.0" y="119.0" width="1.900" height="1.900" fill="#8a9090"/>
<rect x="875.500" y="107.500" width="14" height="11" rx="0.8" fill="#ececec" stroke="#7a7a7a"/><rect x="876" y="108" width="13" height="1.500" fill="#8fa7c6"/><path d="M877.500 112.500H887.500M877.500 115.500H887.500" stroke="#7a7a7a" stroke-width="0.9"/>
<rect x="884.500" y="114.500" width="9" height="9" fill="#6d83c4" stroke="#44589c"/><rect x="886" y="115.500" width="6" height="3.500" fill="#f6f6f8"/><rect x="887" y="120.500" width="5" height="3" fill="#d6d6dc"/>
<rect x="906.500" y="106.500" width="14" height="11" rx="0.8" fill="#ececec" stroke="#7a7a7a"/><rect x="907" y="107" width="13" height="1.500" fill="#8fa7c6"/>
<ellipse cx="915.500" cy="118.500" rx="6.300" ry="3.500" fill="#e8ecf6" stroke="#4a68b4" stroke-width="1"/><circle cx="915.500" cy="118.500" r="2" fill="#3a58a8"/>
<circle cx="922.500" cy="121.500" r="3.500" fill="#d65a5e"/><path d="M920.500 121.500H924.500" stroke="#fff" stroke-width="1.300"/>
</svg>

<div id="graph">
<div id="gbg"></div>
<svg class="abs" style="left:0;top:0" width="1002" height="840" viewBox="0 0 1002 840" shape-rendering="crispEdges"><g fill="none" stroke-width="1" stroke-dasharray="1 2"><path d="M260.5 226.0V726.0M279.5 226.0V726.0M292.5 226.0V726.0M302.5 226.0V726.0M310.5 226.0V726.0M317.5 226.0V726.0M323.5 226.0V726.0M329.5 226.0V726.0M365.5 226.0V726.0M384.5 226.0V726.0M397.5 226.0V726.0M407.5 226.0V726.0M415.5 226.0V726.0M422.5 226.0V726.0M428.5 226.0V726.0M434.5 226.0V726.0M470.5 226.0V726.0M489.5 226.0V726.0M502.5 226.0V726.0M512.5 226.0V726.0M520.5 226.0V726.0M527.5 226.0V726.0M533.5 226.0V726.0M539.5 226.0V726.0M575.5 226.0V726.0M594.5 226.0V726.0M607.5 226.0V726.0M617.5 226.0V726.0M625.5 226.0V726.0M632.5 226.0V726.0M638.5 226.0V726.0M644.5 226.0V726.0M680.5 226.0V726.0M699.5 226.0V726.0M712.5 226.0V726.0M722.5 226.0V726.0M730.5 226.0V726.0M737.5 226.0V726.0M743.5 226.0V726.0M749.5 226.0V726.0M785.5 226.0V726.0M804.5 226.0V726.0M817.5 226.0V726.0M827.5 226.0V726.0M835.5 226.0V726.0M842.5 226.0V726.0M848.5 226.0V726.0M854.5 226.0V726.0M890.5 226.0V726.0M909.5 226.0V726.0M922.5 226.0V726.0M932.5 226.0V726.0M940.5 226.0V726.0M947.5 226.0V726.0M953.5 226.0V726.0M959.5 226.0V726.0" stroke="#202020"/><path d="M229.0 240.5H965.0M229.0 255.5H965.0M229.0 270.5H965.0M229.0 284.5H965.0M229.0 299.5H965.0M229.0 314.5H965.0M229.0 328.5H965.0M229.0 343.5H965.0M229.0 358.5H965.0M229.0 372.5H965.0M229.0 387.5H965.0M229.0 402.5H965.0M229.0 416.5H965.0M229.0 431.5H965.0M229.0 446.5H965.0M229.0 460.5H965.0M229.0 475.5H965.0M229.0 490.5H965.0M229.0 504.5H965.0M229.0 519.5H965.0M229.0 534.5H965.0M229.0 548.5H965.0M229.0 563.5H965.0M229.0 578.5H965.0M229.0 592.5H965.0M229.0 607.5H965.0M229.0 622.5H965.0M229.0 636.5H965.0M229.0 651.5H965.0M229.0 666.5H965.0M229.0 680.5H965.0M229.0 695.5H965.0M229.0 710.5H965.0M229.0 725.5H965.0" stroke="#272727"/><path d="M229.5 226.0V726.0M334.5 226.0V726.0M439.5 226.0V726.0M544.5 226.0V726.0M649.5 226.0V726.0M754.5 226.0V726.0M859.5 226.0V726.0" stroke="#303030"/><path d="M229.0 226.5H965.0" stroke="#323232"/><path d="M964.5 226.0V726.0" stroke="#8a8a8a"/></g><path d="M216.5 226V727M204 226.5H217M212 228.5H217M212 231.5H217M212 234.5H217M212 237.5H217M208 240.5H217M212 243.5H217M212 246.5H217M212 249.5H217M212 252.5H217M204 255.5H217M212 258.5H217M212 261.5H217M212 264.5H217M212 267.5H217M208 270.5H217M212 272.5H217M212 275.5H217M212 278.5H217M212 281.5H217M204 284.5H217M212 287.5H217M212 290.5H217M212 293.5H217M212 296.5H217M208 299.5H217M212 302.5H217M212 305.5H217M212 308.5H217M212 311.5H217M204 314.5H217M212 316.5H217M212 319.5H217M212 322.5H217M212 325.5H217M208 328.5H217M212 331.5H217M212 334.5H217M212 337.5H217M212 340.5H217M204 343.5H217M212 346.5H217M212 349.5H217M212 352.5H217M212 355.5H217M208 358.5H217M212 361.5H217M212 363.5H217M212 366.5H217M212 369.5H217M204 372.5H217M212 375.5H217M212 378.5H217M212 381.5H217M212 384.5H217M208 387.5H217M212 390.5H217M212 393.5H217M212 396.5H217M212 399.5H217M204 402.5H217M212 405.5H217M212 407.5H217M212 410.5H217M212 413.5H217M208 416.5H217M212 419.5H217M212 422.5H217M212 425.5H217M212 428.5H217M204 431.5H217M212 434.5H217M212 437.5H217M212 440.5H217M212 443.5H217M208 446.5H217M212 449.5H217M212 452.5H217M212 454.5H217M212 457.5H217M204 460.5H217M212 463.5H217M212 466.5H217M212 469.5H217M212 472.5H217M208 475.5H217M212 478.5H217M212 481.5H217M212 484.5H217M212 487.5H217M204 490.5H217M212 493.5H217M212 496.5H217M212 498.5H217M212 501.5H217M208 504.5H217M212 507.5H217M212 510.5H217M212 513.5H217M212 516.5H217M204 519.5H217M212 522.5H217M212 525.5H217M212 528.5H217M212 531.5H217M208 534.5H217M212 537.5H217M212 540.5H217M212 543.5H217M212 545.5H217M204 548.5H217M212 551.5H217M212 554.5H217M212 557.5H217M212 560.5H217M208 563.5H217M212 566.5H217M212 569.5H217M212 572.5H217M212 575.5H217M204 578.5H217M212 581.5H217M212 584.5H217M212 587.5H217M212 589.5H217M208 592.5H217M212 595.5H217M212 598.5H217M212 601.5H217M212 604.5H217M204 607.5H217M212 610.5H217M212 613.5H217M212 616.5H217M212 619.5H217M208 622.5H217M212 625.5H217M212 628.5H217M212 631.5H217M212 634.5H217M204 636.5H217M212 639.5H217M212 642.5H217M212 645.5H217M212 648.5H217M208 651.5H217M212 654.5H217M212 657.5H217M212 660.5H217M212 663.5H217M204 666.5H217M212 669.5H217M212 672.5H217M212 675.5H217M212 678.5H217M208 680.5H217M212 683.5H217M212 686.5H217M212 689.5H217M212 692.5H217M204 695.5H217M212 698.5H217M212 701.5H217M212 704.5H217M212 707.5H217M208 710.5H217M212 713.5H217M212 716.5H217M212 719.5H217M212 722.5H217M204 725.5H217" stroke="#fff" stroke-width="1" fill="none"/><path d="M229 732.5H965M229.5 732V745M260.5 732V741M279.5 732V741M292.5 732V741M302.5 732V741M310.5 732V741M317.5 732V741M323.5 732V741M329.5 732V741M334.5 732V745M365.5 732V741M384.5 732V741M397.5 732V741M407.5 732V741M415.5 732V741M422.5 732V741M428.5 732V741M434.5 732V741M439.5 732V745M470.5 732V741M489.5 732V741M502.5 732V741M512.5 732V741M520.5 732V741M527.5 732V741M533.5 732V741M539.5 732V741M544.5 732V745M575.5 732V741M594.5 732V741M607.5 732V741M617.5 732V741M625.5 732V741M632.5 732V741M638.5 732V741M644.5 732V741M649.5 732V745M680.5 732V741M699.5 732V741M712.5 732V741M722.5 732V741M730.5 732V741M737.5 732V741M743.5 732V741M749.5 732V741M754.5 732V745M785.5 732V741M804.5 732V741M817.5 732V741M827.5 732V741M835.5 732V741M842.5 732V741M848.5 732V741M854.5 732V741M859.5 732V745M890.5 732V741M909.5 732V741M922.5 732V741M932.5 732V741M940.5 732V741M947.5 732V741M953.5 732V741M959.5 732V741M964.5 732V745" stroke="#fff" stroke-width="1" fill="none"/></svg>
<svg class="abs" style="left:0;top:0" width="1002" height="840" viewBox="0 0 1002 840" shape-rendering="crispEdges"><clipPath id="pc"><rect x="229" y="220" width="735" height="478"/></clipPath><path d="M229.00 255.60L230.84 255.60L232.68 255.60L234.51 255.60L236.35 255.60L238.19 255.60L240.03 255.60L241.86 255.60L243.70 255.60L245.54 255.60L247.38 255.60L249.21 255.60L251.05 255.60L252.89 255.60L254.72 255.60L256.56 255.60L258.40 255.60L260.24 255.60L262.07 255.60L263.91 255.60L265.75 255.60L267.59 255.60L269.43 255.60L271.26 255.60L273.10 255.60L274.94 255.60L276.78 255.60L278.61 255.60L280.45 255.60L282.29 255.60L284.12 255.60L285.96 255.60L287.80 255.60L289.64 255.60L291.48 255.60L293.31 255.60L295.15 255.60L296.99 255.60L298.82 255.60L300.66 255.60L302.50 255.60L304.34 255.60L306.18 255.60L308.01 255.60L309.85 255.60L311.69 255.60L313.52 255.60L315.36 255.60L317.20 255.60L319.04 255.60L320.88 255.60L322.71 255.60L324.55 255.60L326.39 255.60L328.23 255.60L330.06 255.60L331.90 255.60L333.74 255.60L335.57 255.60L337.41 255.60L339.25 255.60L341.09 255.60L342.93 255.60L344.76 255.60L346.60 255.60L348.44 255.60L350.27 255.60L352.11 255.60L353.95 255.60L355.79 255.60L357.62 255.60L359.46 255.60L361.30 255.60L363.14 255.60L364.98 255.60L366.81 255.60L368.65 255.60L370.49 255.60L372.32 255.60L374.16 255.60L376.00 255.60L377.84 255.60L379.68 255.60L381.51 255.60L383.35 255.60L385.19 255.60L387.02 255.60L388.86 255.60L390.70 255.60L392.54 255.60L394.38 255.60L396.21 255.60L398.05 255.60L399.89 255.60L401.73 255.60L403.56 255.60L405.40 255.60L407.24 255.60L409.08 255.60L410.91 255.60L412.75 255.60L414.59 255.60L416.42 255.60L418.26 255.60L420.10 255.60L421.94 255.60L423.77 255.60L425.61 255.60L427.45 255.60L429.29 255.60L431.12 255.60L432.96 255.60L434.80 255.60L436.64 255.60L438.48 255.60L440.31 255.60L442.15 255.60L443.99 255.60L445.82 255.60L447.66 255.60L449.50 255.60L451.34 255.60L453.17 255.60L455.01 255.60L456.85 255.60L458.69 255.60L460.52 255.60L462.36 255.60L464.20 255.60L466.04 255.60L467.88 255.60L469.71 255.60L471.55 255.60L473.39 255.60L475.23 255.60L477.06 255.60L478.90 255.60L480.74 255.60L482.58 255.60L484.41 255.60L486.25 255.60L488.09 255.60L489.93 255.60L491.76 255.60L493.60 255.60L495.44 255.60L497.28 255.60L499.11 255.60L500.95 255.60L502.79 255.60L504.62 255.60L506.46 255.60L508.30 255.60L510.14 255.60L511.97 255.60L513.81 255.60L515.65 255.60L517.49 255.60L519.33 255.60L521.16 255.60L523.00 255.60L524.84 255.60L526.67 255.60L528.51 255.60L530.35 255.60L532.19 255.60L534.02 255.60L535.86 255.60L537.70 255.60L539.54 255.60L541.38 255.60L543.21 255.60L545.05 255.60L546.89 255.60L548.72 255.60L550.56 255.60L552.40 255.60L554.24 255.60L556.08 255.60L557.91 255.60L559.75 255.60L561.59 255.60L563.42 255.60L565.26 255.60L567.10 255.60L568.94 255.60L570.77 255.60L572.61 255.61L574.45 255.61L576.29 255.61L578.12 255.61L579.96 255.61L581.80 255.61L583.64 255.61L585.47 255.61L587.31 255.61L589.15 255.61L590.99 255.61L592.83 255.61L594.66 255.61L596.50 255.61L598.34 255.61L600.17 255.61L602.01 255.61L603.85 255.61L605.69 255.61L607.53 255.61L609.36 255.61L611.20 255.61L613.04 255.62L614.88 255.62L616.71 255.62L618.55 255.62L620.39 255.62L622.23 255.62L624.06 255.62L625.90 255.63L627.74 255.63L629.58 255.63L631.41 255.63L633.25 255.63L635.09 255.64L636.92 255.64L638.76 255.64L640.60 255.65L642.44 255.65L644.28 255.65L646.11 255.66L647.95 255.66L649.79 255.67L651.62 255.67L653.46 255.68L655.30 255.69L657.14 255.69L658.97 255.70L660.81 255.71L662.65 255.72L664.49 255.73L666.33 255.74L668.16 255.75L670.00 255.76L671.84 255.77L673.68 255.79L675.51 255.80L677.35 255.82L679.19 255.84L681.02 255.86L682.86 255.88L684.70 255.90L686.54 255.93L688.38 255.96L690.21 255.99L692.05 256.02L693.89 256.05L695.73 256.09L697.56 256.13L699.40 256.17L701.24 256.22L703.07 256.27L704.91 256.33L706.75 256.39L708.59 256.46L710.42 256.53L712.26 256.60L714.10 256.69L715.94 256.78L717.78 256.87L719.61 256.98L721.45 257.09L723.29 257.22L725.12 257.35L726.96 257.50L728.80 257.65L730.64 257.82L732.47 258.00L734.31 258.20L736.15 258.42L737.99 258.65L739.83 258.89L741.66 259.16L743.50 259.45L745.34 259.77L747.17 260.10L749.01 260.47L750.85 260.86L752.69 261.28L754.52 261.74L756.36 262.22L758.20 262.75L760.04 263.31L761.88 263.92L763.71 264.57L765.55 265.27L767.39 266.02L769.23 266.82L771.06 267.68L772.90 268.60L774.74 269.57L776.58 270.62L778.41 271.73L780.25 272.92L782.09 274.18L783.92 275.51L785.76 276.93L787.60 278.44L789.44 280.03L791.27 281.71L793.11 283.48L794.95 285.35L796.79 287.31L798.62 289.38L800.46 291.54L802.30 293.80L804.14 296.17L805.98 298.64L807.81 301.22L809.65 303.89L811.49 306.67L813.33 309.56L815.16 312.54L817.00 315.62L818.84 318.81L820.67 322.08L822.51 325.46L824.35 328.92L826.19 332.48L828.02 336.12L829.86 339.85L831.70 343.65L833.54 347.54L835.38 351.50L837.21 355.53L839.05 359.63L840.89 363.79L842.73 368.02L844.56 372.30L846.40 376.64L848.24 381.04L850.07 385.48L851.91 389.97L853.75 394.51L855.59 399.08L857.43 403.70L859.26 408.35L861.10 413.04L862.94 417.75L864.77 422.50L866.61 427.28L868.45 432.08L870.29 436.91L872.12 441.75L873.96 446.62L875.80 451.51L877.64 456.42L879.48 461.35L881.31 466.29L883.15 471.24L884.99 476.21L886.82 481.19L888.66 486.19L890.50 491.19L892.34 496.21L894.18 501.23L896.01 506.26L897.85 511.30L899.69 516.35L901.52 521.40L903.36 526.46L905.20 531.53L907.04 536.60L908.88 541.68L910.71 546.76L912.55 551.84L914.39 556.93L916.23 562.03L918.06 567.12L919.90 572.22L921.74 577.33L923.58 582.43L925.41 587.54L927.25 592.65L929.09 597.76L930.92 602.87L932.76 607.99L934.60 613.11L936.44 618.22L938.27 623.35L940.11 628.47L941.95 633.59L943.79 638.71L945.62 643.84L947.46 648.96L949.30 654.09L951.14 659.22L952.98 664.34L954.81 669.47L956.65 674.60L958.49 679.73L960.32 684.86L962.16 689.99L964.00 695.13L965.84 700.26L967.68 705.39" stroke="#f00000" stroke-width="3" fill="none" stroke-linejoin="round" clip-path="url(#pc)"/></svg>
<span class="yl" style="top:216.2px">2.0</span><span class="yl" style="top:245.2px">0.0</span><span class="yl" style="top:274.2px">-2.0</span><span class="yl" style="top:304.2px">-4.0</span><span class="yl" style="top:333.2px">-6.0</span><span class="yl" style="top:362.2px">-8.0</span><span class="yl" style="top:392.2px">-10.0</span><span class="yl" style="top:421.2px">-12.0</span><span class="yl" style="top:450.2px">-14.0</span><span class="yl" style="top:480.2px">-16.0</span><span class="yl" style="top:509.2px">-18.0</span><span class="yl" style="top:538.2px">-20.0</span><span class="yl" style="top:568.2px">-22.0</span><span class="yl" style="top:597.2px">-24.0</span><span class="yl" style="top:626.2px">-26.0</span><span class="yl" style="top:656.2px">-28.0</span><span class="yl" style="top:685.2px">-30.0</span><span class="yl" style="top:715.2px">-32.0</span>
<span class="xl" style="left:228.8px">10<sup>-1</sup></span><span class="xl" style="left:333.8px">10<sup>0</sup></span><span class="xl" style="left:438.8px">10<sup>1</sup></span><span class="xl" style="left:543.8px">10<sup>2</sup></span><span class="xl" style="left:648.8px">10<sup>3</sup></span><span class="xl" style="left:753.8px">10<sup>4</sup></span><span class="xl" style="left:858.8px">10<sup>5</sup></span><span class="xl" style="left:963.8px">10<sup>6</sup></span>
<span class="gt" style="left:16px;top:167px;letter-spacing:-0.078px">dB20((VF("/net3") </span><span class="gt" style="left:125.9px;top:167px;letter-spacing:0.093px">/ VF("/net2")))</span>
<span class="gt" style="left:842px;top:167px">Fri Sep 9 01:08:24</span>
<span class="gt" style="left:842px;top:184px">2022</span>
<div style="left:988px;top:165px;width:6px;height:24px;overflow:hidden"><span class="gt" style="left:2px;top:2px">1</span></div>
<!-- legend -->
<div id="lghead"></div>
<span id="lgname">Name</span>
<div id="lgsep"></div>
<div id="lgpill"></div>
<div id="lgrow"><svg width="12" height="12" style="left:6px;top:3px" viewBox="0 0 12 12" shape-rendering="crispEdges"><path d="M0.5 0V9.5H7" stroke="#a8a8a8" stroke-width="1" stroke-dasharray="1 1" fill="none"/></svg><div id="lgsw"></div><span id="lgtxt">dB20((VF(…/net2")))</span></div>
<!-- slider -->
<div class="slbtn" style="left:229px"><svg width="13" height="25" viewBox="0 0 13 25" style="left:0;top:0"><path d="M7.8 7.600V13.200L3.800 11V9.800Z" fill="#e00000"/><path d="M2.800 9.400H5V11.400H2.800Z" fill="#e00000"/></svg></div>
<div class="slbtn" style="left:950px"><svg width="13" height="25" viewBox="0 0 13 25" style="left:0;top:0"><path d="M3.200 7.600V13.200L7.200 11V9.800Z" fill="#e00000"/><path d="M6 9.400H8.200V11.400H6Z" fill="#e00000"/></svg></div>
<div id="slthumb"></div>
<div id="sltrack"><svg width="685" height="23" viewBox="0 0 685 23" style="left:0;top:0" shape-rendering="crispEdges"><path id="mini" d="M1.0 2.30L4.4 2.30L7.8 2.30L11.3 2.30L14.7 2.30L18.1 2.30L21.5 2.30L24.9 2.30L28.4 2.30L31.8 2.30L35.2 2.30L38.6 2.30L42.0 2.30L45.5 2.30L48.9 2.30L52.3 2.30L55.7 2.30L59.1 2.30L62.6 2.30L66.0 2.30L69.4 2.30L72.8 2.30L76.2 2.30L79.7 2.30L83.1 2.30L86.5 2.30L89.9 2.30L93.3 2.30L96.8 2.30L100.2 2.30L103.6 2.30L107.0 2.30L110.4 2.30L113.9 2.30L117.3 2.30L120.7 2.30L124.1 2.30L127.5 2.30L131.0 2.30L134.4 2.30L137.8 2.30L141.2 2.30L144.6 2.30L148.1 2.30L151.5 2.30L154.9 2.30L158.3 2.30L161.7 2.30L165.2 2.30L168.6 2.30L172.0 2.30L175.4 2.30L178.8 2.30L182.3 2.30L185.7 2.30L189.1 2.30L192.5 2.30L195.9 2.30L199.4 2.30L202.8 2.30L206.2 2.30L209.6 2.30L213.0 2.30L216.5 2.30L219.9 2.30L223.3 2.30L226.7 2.30L230.1 2.30L233.6 2.30L237.0 2.30L240.4 2.30L243.8 2.30L247.2 2.30L250.7 2.30L254.1 2.30L257.5 2.30L260.9 2.30L264.3 2.30L267.8 2.30L271.2 2.30L274.6 2.30L278.0 2.30L281.4 2.30L284.9 2.30L288.3 2.30L291.7 2.30L295.1 2.30L298.5 2.30L302.0 2.30L305.4 2.30L308.8 2.30L312.2 2.30L315.6 2.30L319.1 2.30L322.5 2.30L325.9 2.30L329.3 2.30L332.7 2.30L336.2 2.30L339.6 2.30L343.0 2.30L346.4 2.30L349.8 2.30L353.3 2.30L356.7 2.30L360.1 2.30L363.5 2.30L366.9 2.30L370.4 2.30L373.8 2.30L377.2 2.30L380.6 2.30L384.0 2.30L387.5 2.30L390.9 2.30L394.3 2.30L397.7 2.30L401.1 2.30L404.6 2.30L408.0 2.31L411.4 2.31L414.8 2.31L418.2 2.31L421.7 2.31L425.1 2.31L428.5 2.32L431.9 2.32L435.3 2.32L438.8 2.32L442.2 2.33L445.6 2.33L449.0 2.34L452.4 2.35L455.9 2.36L459.3 2.37L462.7 2.38L466.1 2.39L469.5 2.40L473.0 2.42L476.4 2.44L479.8 2.47L483.2 2.50L486.6 2.53L490.1 2.57L493.5 2.61L496.9 2.66L500.3 2.72L503.7 2.79L507.2 2.87L510.6 2.96L514.0 3.06L517.4 3.17L520.8 3.30L524.3 3.44L527.7 3.60L531.1 3.78L534.5 3.97L537.9 4.18L541.4 4.41L544.8 4.66L548.2 4.92L551.6 5.20L555.0 5.50L558.5 5.82L561.9 6.15L565.3 6.49L568.7 6.84L572.1 7.21L575.6 7.59L579.0 7.97L582.4 8.37L585.8 8.77L589.2 9.18L592.7 9.59L596.1 10.01L599.5 10.43L602.9 10.86L606.3 11.29L609.8 11.72L613.2 12.15L616.6 12.59L620.0 13.03L623.4 13.47L626.9 13.91L630.3 14.35L633.7 14.80L637.1 15.24L640.5 15.68L644.0 16.13L647.4 16.58L650.8 17.02L654.2 17.47L657.6 17.92L661.1 18.36L664.5 18.81L667.9 19.26L671.3 19.71L674.7 20.15L678.2 20.60L681.6 21.05L685.0 21.50" stroke="#d80000" stroke-width="1" fill="none"/></svg></div>
<div class="grip" style="left:246px"></div><div class="grip" style="left:248px;width:1.4px"></div>
<div class="grip" style="left:943px"></div><div class="grip" style="left:945px;width:1.4px"></div>
<!-- axis titles -->
<span class="gt" style="left:571px;top:767.8px;font-size:14px">freq (Hz)</span>
<span class="gt" id="ydb">(dB)</span>
<!-- marker -->
<svg width="1002" height="840" viewBox="0 0 1002 840" style="left:0;top:0"><path d="M694.5 307.5H783L807.6 300.6L801.6 306.2Q807.5 308.5 807.5 312.5V350.5Q807.5 355.5 802.5 355.5H694.5Q689.5 355.5 689.5 350.5V312.5Q689.5 307.5 694.5 307.5Z" fill="#000" stroke="#6e6e6e" stroke-width="1.1"/><circle cx="699.2" cy="313.5" r="4.6" fill="#e40000"/><path d="M693 320.5H803" stroke="#fff" stroke-width="1" shape-rendering="crispEdges"/></svg>
<span class="mk" style="left:709px;top:307px">dB20((VF...net2")))</span>
<span class="mk" style="left:694px;top:325px">32.3594kHz</span>
<span class="mk" style="left:694px;top:340px">-3.0824dB</span>
<!-- selection border -->
<div class="bh" style="left:5px;top:159px;width:987px;height:2px;background:repeating-linear-gradient(90deg,#8c8c8c 0 10px,transparent 10px 12px)"></div>
<div class="bh" style="left:12px;top:161px;width:980px;height:1px;background:repeating-linear-gradient(90deg,#e81440 0 4px,transparent 4px 6px)"></div>
<div class="bh" style="left:7px;top:793px;width:985px;height:2px;background:repeating-linear-gradient(90deg,#8c8c8c 0 10px,transparent 10px 12px)"></div>
<div class="bh" style="left:8px;top:792px;width:984px;height:1px;background:repeating-linear-gradient(90deg,#e81440 0 4px,transparent 4px 6px)"></div>
<div class="bh" style="left:5px;top:159px;width:2px;height:631px;background:repeating-linear-gradient(180deg,#8c8c8c 0 10px,transparent 10px 12px)"></div>
<div class="bh" style="left:7px;top:164px;width:1px;height:626px;background:repeating-linear-gradient(180deg,#e81440 0 4px,transparent 4px 6px)"></div>
<div class="bh" style="left:995px;top:165px;width:2px;height:625px;background:repeating-linear-gradient(180deg,#8c8c8c 0 11px,transparent 11px 12px)"></div>
<div class="bh" style="left:994px;top:164px;width:1px;height:626px;background:repeating-linear-gradient(180deg,#e81440 0 4px,transparent 4px 6px)"></div>
<svg width="1002" height="840" viewBox="0 0 1002 840" style="left:0;top:0">
<path d="M5 159H11L5 165Z" fill="#8a8a8a"/>
<path d="M997 159H992Q992 164 997 164Z" fill="#6ea8f8"/>
<path d="M5 795V790Q10 790 10 795Z" fill="#6ea8f8"/>
<path d="M997 795V790Q992 790 992 795Z" fill="#6ea8f8"/>
<path d="M496.5 159H506.500A5 5.5 0 0 1 496.5 159Z" fill="#868686"/>
<path d="M496.5 795H505.500A4.5 6 0 0 0 496.5 795Z" fill="#78acff"/>
<path d="M5 472V482A6 5 0 0 0 5 472Z" fill="#868686"/>
<path d="M997 472.500V481.500A5.500 4.500 0 0 1 997 472.500Z" fill="#78acff"/>
</svg>

</div>

<div id="edgeL"></div><div id="edgeLw"></div><div id="edgeR"></div><div id="edgeRg"></div>
<div id="gbot"></div>
<div id="st1w"></div>
<div id="st1"></div>
<div class="hd" style="left:5px;top:805px;height:7px;width:5px"></div>
<span class="st" style="left:11px;top:800px">mouse L:</span>
<span class="st" style="left:495.5px;top:800px">M:</span>
<span class="st" style="left:983.5px;top:800px">R:</span>
<div id="st2"></div>
<div id="stpink"></div>
<span class="st" style="left:2.8px;top:821px;letter-spacing:-0.25px">38(84)</span>
<div id="stsep"></div>
<span class="st" style="left:51.4px;top:821px;letter-spacing:0.057px">Trace: </span><span class="st" style="left:85.0px;top:821px;letter-spacing:-0.233px">dB20((VF("/net3") </span><span class="st" style="left:175.7px;top:821px;letter-spacing:-0.136px">/ </span><span class="st" style="left:182.0px;top:821px;letter-spacing:-0.274px">VF("/net2"))); </span><span class="st" style="left:248.8px;top:821px;letter-spacing:-0.122px">Context: </span><span class="st" style="left:294.9px;top:821px;letter-spacing:0.031px">/home21</span><span class="st" style="left:340.4px;top:821px;letter-spacing:0.179px">/huhlab</span><span class="st" style="left:380.0px;top:821px;letter-spacing:0.080px">/dingwending</span><span class="st" style="left:449.9px;top:821px;letter-spacing:0.123px">/simulation</span><span class="st" style="left:507.8px;top:821px;letter-spacing:0.171px">/Low_Pass_Filter</span><span class="st" style="left:592.0px;top:821px;letter-spacing:0.023px">/spectre</span><span class="st" style="left:633.5px;top:821px;letter-spacing:0.023px">/schematic</span><span class="st" style="left:689.4px;top:821px;letter-spacing:0.155px">/psf; </span><span class="st" style="left:714.8px;top:821px;letter-spacing:-0.142px">Dataset: </span><span class="st" style="left:760.8px;top:821px;letter-spacing:-0.006px">tran-tran</span>
<div id="stgrip"></div>
<div id="stbot"></div>

</div>
</body></html>
